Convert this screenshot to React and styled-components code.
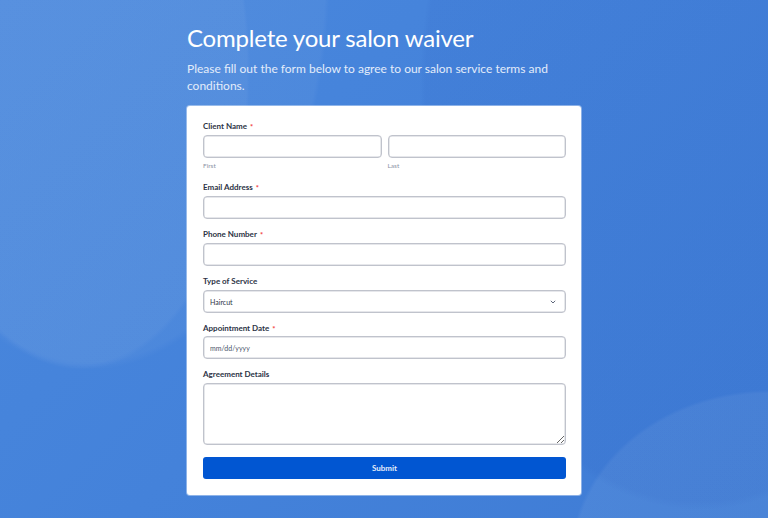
import React from 'react'
import styled, { createGlobalStyle } from 'styled-components'

const GlobalStyle = createGlobalStyle`
html, body {
    margin:0;
    padding:0;
    height:100%;
}
body {
    font-family: Lato, "Open Sans", sans-serif;
    background-color:#4582db;
    background-image:
        radial-gradient(ellipse 240px 400px at 90px -30px, rgba(255,255,255,0.04) 98%, transparent 100%),
        radial-gradient(ellipse 170px 300px at 80px 70px, rgba(255,255,255,0.04) 98%, transparent 100%),
        radial-gradient(ellipse 280px 420px at 700px 90px, rgba(20,60,170,0.06) 98%, transparent 100%),
        radial-gradient(ellipse 200px 170px at 770px 560px, rgba(255,255,255,0.06) 98%, transparent 100%),
        linear-gradient(135deg, #4a88dd 0%, #4482da 50%, #3f7cd5 100%);
    min-height:518px;
}
#root {
    min-height:518px;
}
`

const Page = styled.div`
display:flex;
justify-content:center;
padding:23px 0 20px;
`

const Wrapper = styled.div`
width:394px;
`

const Title = styled.h1`
margin:0;
font-size:24px;
font-weight:400;
letter-spacing:-0.2px;
color:#ffffff;
line-height:30px;
`

const Subtitle = styled.p`
margin:8px 0 12px;
font-size:12px;
line-height:16.5px;
color:#e3ecfa;
`

const Card = styled.form`
background:#ffffff;
border-radius:3px;
padding:14px 15px 16px 16px;
box-shadow:0 0 0 1px rgba(255,255,255,0.4);
`

const Field = styled.div`
margin-bottom:${p => p.$mb ?? 9}px;
`

const Label = styled.label`
display:flex;
align-items:center;
height:11px;
font-size:8px;
font-weight:700;
color:#2c3345;
margin-bottom:${p => p.$gap || 4}px;
`

const Required = styled.span`
color:#f23a3c;
margin-left:3px;
padding-top:4px;
font-size:7.5px;
line-height:8px;
`

const Row = styled.div`
display:grid;
grid-template-columns:1fr 1fr;
gap:6px;
`

const Input = styled.input`
display:block;
box-sizing:border-box;
width:100%;
height:23px;
border:1px solid #c0c3cc;
box-shadow:inset 0 0 0 0.5px #cdd0d7;
border-radius:4px;
padding:0 6px;
font-family:inherit;
font-size:7px;
color:#2c3345;
background:#fff;
outline:none;
&::placeholder {
    color:#4d566b;
}
`

const Sub = styled.div`
font-size:6.5px;
color:#8a92a3;
margin-top:4px;
line-height:8px;
`

const SelectBox = styled.div`
box-sizing:border-box;
height:23px;
border:1px solid #c0c3cc;
box-shadow:inset 0 0 0 0.5px #cdd0d7;
border-radius:4px;
padding:0 9px 0 6px;
display:flex;
align-items:center;
justify-content:space-between;
font-size:7px;
color:#2c3345;
`

const TextArea = styled.textarea`
display:block;
box-sizing:border-box;
width:100%;
height:62px;
border:1px solid #c0c3cc;
box-shadow:inset 0 0 0 0.5px #cdd0d7;
border-radius:4px;
resize:vertical;
font-family:inherit;
outline:none;
`

const SubmitButton = styled.button`
display:block;
width:100%;
height:22px;
margin-top:12px;
border:none;
border-radius:3px;
background:#0156d2;
color:#e4ecfb;
font-family:inherit;
font-size:8px;
font-weight:700;
cursor:pointer;
`

function Chevron() {
    return (
        <svg width="6" height="4" viewBox="0 0 6 4">
            <path d="M0.8 0.8 L3 3 L5.2 0.8" fill="none" stroke="#4d566b" strokeWidth="0.9" />
        </svg>
    )
}

function App() {
    return (
        <>
            <GlobalStyle />
            <Page>
                <Wrapper>
                    <Title>Complete your salon waiver</Title>
                    <Subtitle>Please fill out the form below to agree to our salon service terms and conditions.</Subtitle>
                    <Card onSubmit={e => e.preventDefault()}>
                        <Field $mb={11}>
                            <Label>Client Name<Required>*</Required></Label>
                            <Row>
                                <div>
                                    <Input type="text" />
                                    <Sub>First</Sub>
                                </div>
                                <div>
                                    <Input type="text" />
                                    <Sub>Last</Sub>
                                </div>
                            </Row>
                        </Field>
                        <Field>
                            <Label>Email Address<Required>*</Required></Label>
                            <Input type="email" />
                        </Field>
                        <Field>
                            <Label>Phone Number<Required>*</Required></Label>
                            <Input type="tel" />
                        </Field>
                        <Field>
                            <Label>Type of Service</Label>
                            <SelectBox>
                                <span>Haircut</span>
                                <Chevron />
                            </SelectBox>
                        </Field>
                        <Field>
                            <Label $gap={3}>Appointment Date<Required>*</Required></Label>
                            <Input type="text" placeholder="mm/dd/yyyy" />
                        </Field>
                        <Field $mb={0}>
                            <Label>Agreement Details</Label>
                            <TextArea />
                        </Field>
                        <SubmitButton type="submit">Submit</SubmitButton>
                    </Card>
                </Wrapper>
            </Page>
        </>
    )
}

export default App
